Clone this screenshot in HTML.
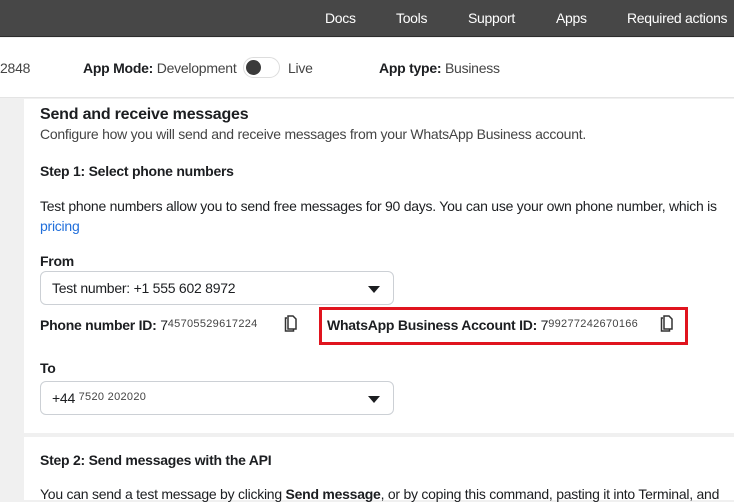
<!DOCTYPE html>
<html><head><meta charset="utf-8"><style>
*{margin:0;padding:0;box-sizing:border-box}
body{width:734px;height:500px;overflow:hidden;background:#f0f0f0;font-family:"Liberation Sans",sans-serif;color:#1c1e21;position:relative}
.a{position:absolute;white-space:nowrap}
.top{position:absolute;left:0;top:0;width:734px;height:37px;background:#474747;border-bottom:1px solid #2c2c2c}
.top span{position:absolute;top:10px;color:#fff;font-size:14px;letter-spacing:-0.3px}
.hdr{position:absolute;left:0;top:38px;width:734px;height:60px;background:#fff;border-bottom:1px solid #e4e4e4}
.main{position:absolute;left:24px;top:99px;width:710px;height:334px;background:#fff}
.main2{position:absolute;left:24px;top:437px;width:710px;height:63px;background:#fff}
.sel{position:absolute;left:40px;width:354px;height:34px;border:1px solid #ccd0d5;border-radius:6px;background:#fff}
.sel .tx{position:absolute;left:11px;top:8px;font-size:14px;color:#1c1e21;letter-spacing:-0.25px}
.sel .ar{position:absolute;right:13px;top:14px;width:0;height:0;border-left:6px solid transparent;border-right:6px solid transparent;border-top:7px solid #1c1e21}
b{font-weight:bold}
.t14{font-size:14px;letter-spacing:-0.25px}
.mask{font-size:11px;color:#444;vertical-align:3px;letter-spacing:0.3px}
</style></head><body>
<div class="top">
<span style="left:325px">Docs</span>
<span style="left:396px">Tools</span>
<span style="left:468px">Support</span>
<span style="left:556px">Apps</span>
<span style="left:627px">Required actions</span>
</div>
<div class="hdr">
<span class="a t14" style="left:0;top:22px;color:#444">2848</span>
<span class="a t14" style="left:83px;top:22px;color:#444"><b style="color:#1c1e21">App Mode:</b> Development</span>
<div class="a" style="left:243px;top:19px;width:37px;height:21px;border-radius:11px;border:1px solid #ddd;background:#fff"><div style="position:absolute;left:2px;top:2px;width:15px;height:15px;border-radius:50%;background:#3a3a3a"></div></div>
<span class="a t14" style="left:288px;top:22px;color:#444">Live</span>
<span class="a t14" style="left:379px;top:22px;color:#444"><b style="color:#1c1e21">App type:</b> Business</span>
</div>
<div class="main"></div>
<div class="main2"></div>
<span class="a" style="left:40px;top:106px;font-size:16px;font-weight:bold;color:#1c1e21;letter-spacing:-0.2px">Send and receive messages</span>
<span class="a t14" style="left:40px;top:126px;color:#444">Configure how you will send and receive messages from your WhatsApp Business account.</span>
<span class="a t14" style="left:40px;top:163px;font-weight:bold">Step 1: Select phone numbers</span>
<span class="a t14" style="left:40px;top:198px;color:#1c1e21">Test phone numbers allow you to send free messages for 90 days. You can use your own phone number, which is</span>
<span class="a t14" style="left:40px;top:218px;color:#216fdb">pricing</span>
<span class="a t14" style="left:40px;top:253px;font-weight:bold">From</span>
<div class="sel" style="top:271px"><span class="tx">Test number: +1 555 602 8972</span><span class="ar"></span></div>
<span class="a t14" style="left:40px;top:317px"><b>Phone number ID:</b> 7<span class="mask">45705529617224</span></span>
<svg class="a" style="left:283px;top:315px" width="16" height="18" viewBox="0 0 16 18" fill="none" stroke="#333" stroke-width="1.5"><path d="M4 3H2.5v13h8v-1.5"/><path d="M5 1h5l3 3v10H5z"/></svg>
<div class="a" style="left:319px;top:307px;width:369px;height:38px;border:3px solid #e0141e"></div>
<span class="a t14" style="left:327px;top:317px"><b>WhatsApp Business Account ID:</b> 7<span class="mask">99277242670166</span></span>
<svg class="a" style="left:659px;top:315px" width="16" height="18" viewBox="0 0 16 18" fill="none" stroke="#333" stroke-width="1.5"><path d="M4 3H2.5v13h8v-1.5"/><path d="M5 1h5l3 3v10H5z"/></svg>
<span class="a t14" style="left:40px;top:360px;font-weight:bold">To</span>
<div class="sel" style="top:381px"><span class="tx">+44 <span class="mask">7520 202020</span></span><span class="ar"></span></div>
<span class="a t14" style="left:40px;top:452px;font-weight:bold">Step 2: Send messages with the API</span>
<span class="a t14" style="left:40px;top:486px">You can send a test message by clicking <b>Send message</b>, or by coping this command, pasting it into Terminal, and</span>
</body></html>
